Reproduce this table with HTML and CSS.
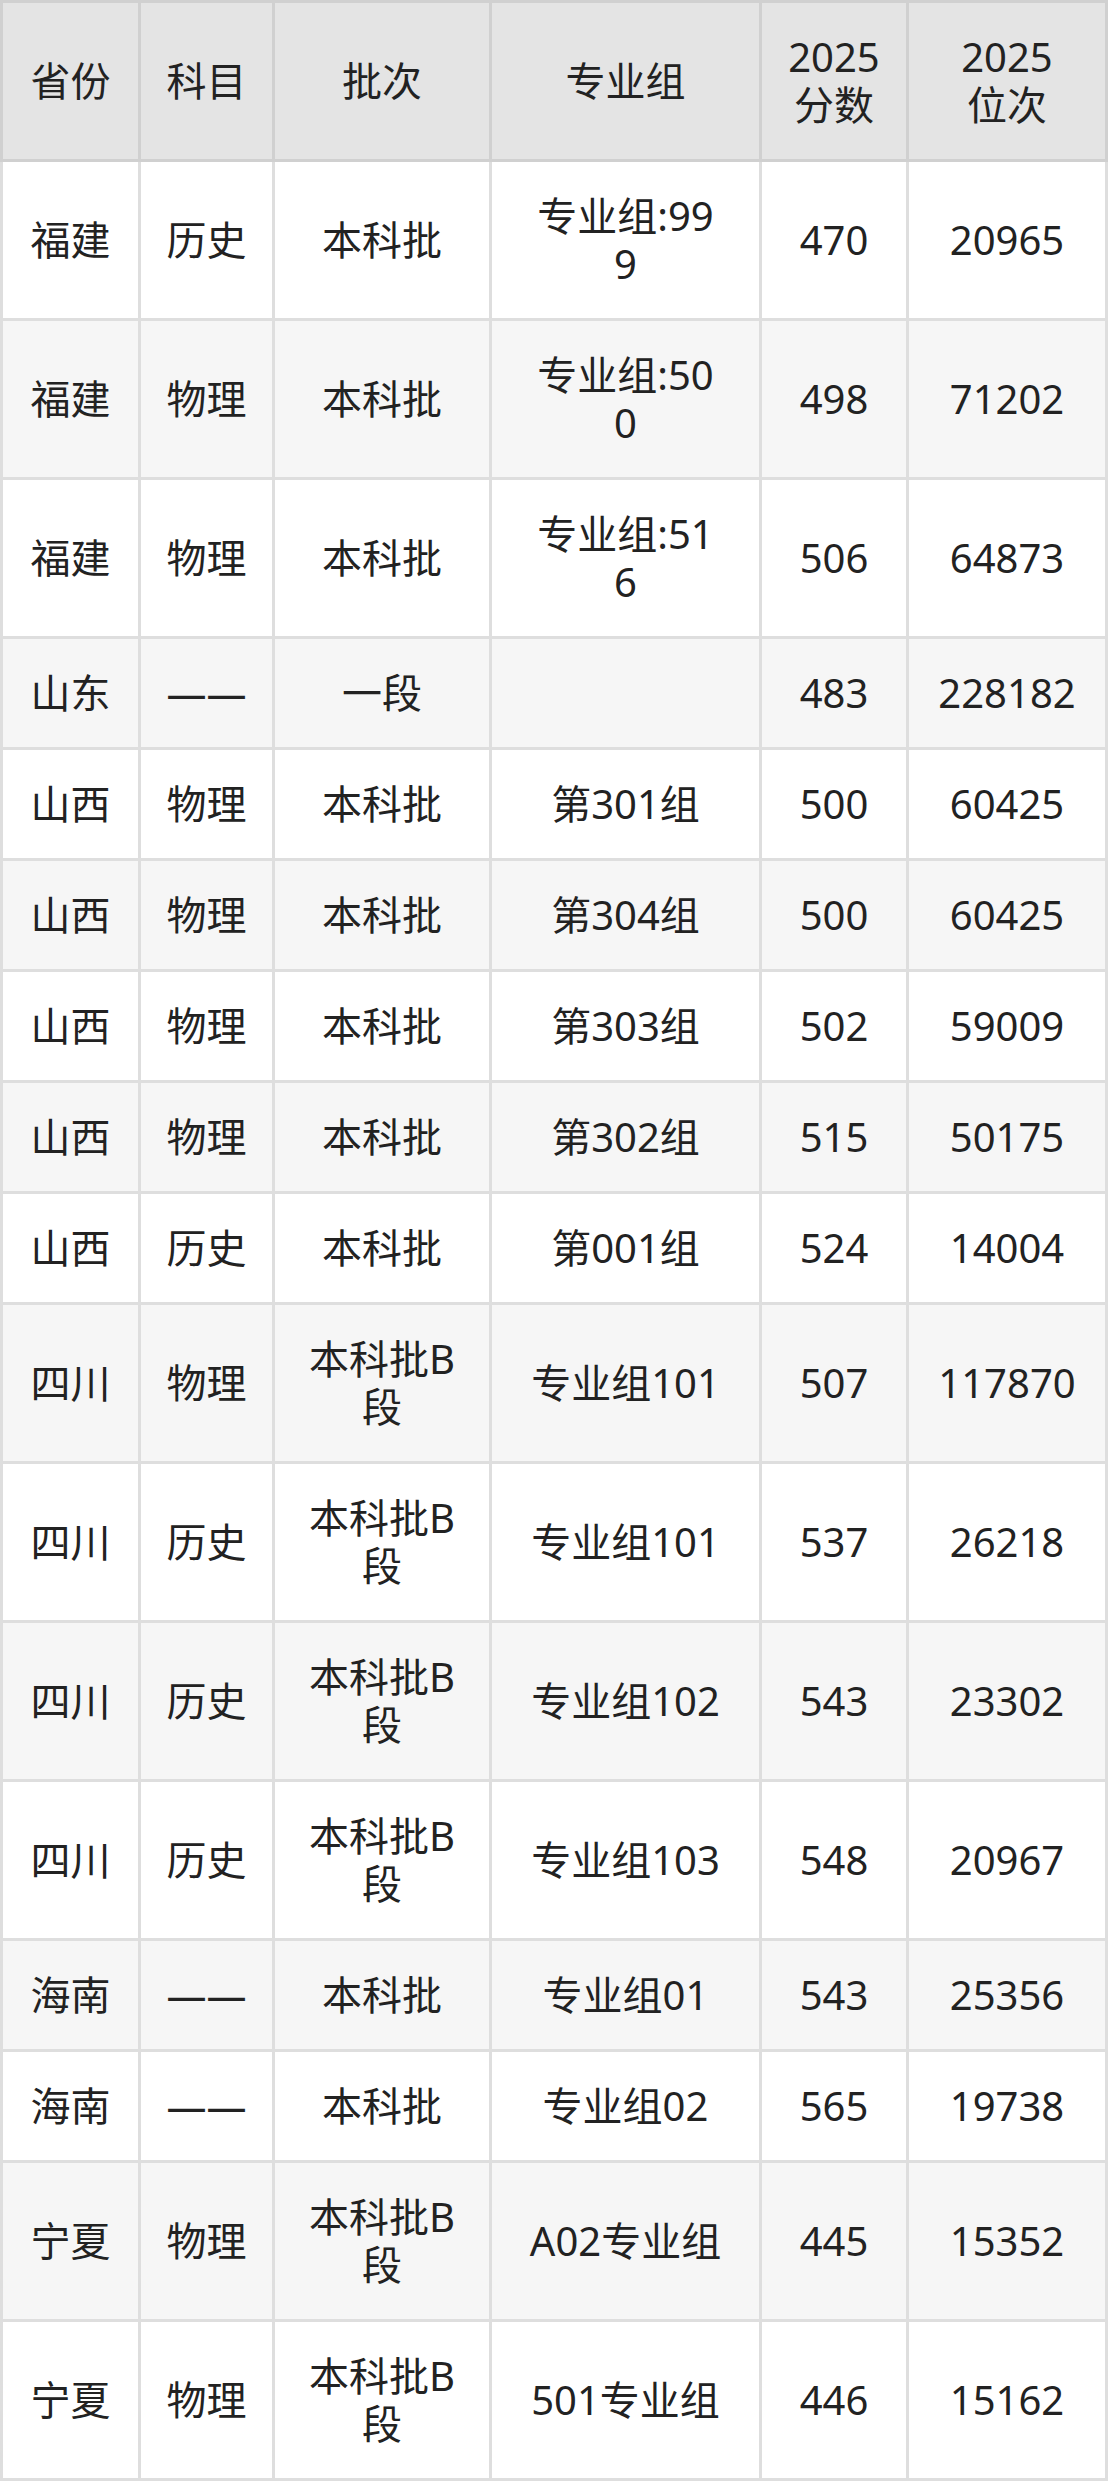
FILE: index.html
```html
<!DOCTYPE html>
<html lang="zh-CN">
<head>
<meta charset="utf-8">
<title>2025 分数位次</title>
<link rel="stylesheet" href="styles.css">
</head>
<body>
<table class="score-table">
  <thead>
    <tr>
      <th class="c1">省份</th>
      <th class="c2">科目</th>
      <th class="c3">批次</th>
      <th class="c4">专业组</th>
      <th class="c5">2025<br>分数</th>
      <th class="c6">2025<br>位次</th>
    </tr>
  </thead>
  <tbody>
    <tr><td>福建</td><td>历史</td><td>本科批</td><td>专业组:99<br>9</td><td>470</td><td>20965</td></tr>
    <tr><td>福建</td><td>物理</td><td>本科批</td><td>专业组:50<br>0</td><td>498</td><td>71202</td></tr>
    <tr><td>福建</td><td>物理</td><td>本科批</td><td>专业组:51<br>6</td><td>506</td><td>64873</td></tr>
    <tr><td>山东</td><td>——</td><td>一段</td><td></td><td>483</td><td>228182</td></tr>
    <tr><td>山西</td><td>物理</td><td>本科批</td><td>第301组</td><td>500</td><td>60425</td></tr>
    <tr><td>山西</td><td>物理</td><td>本科批</td><td>第304组</td><td>500</td><td>60425</td></tr>
    <tr><td>山西</td><td>物理</td><td>本科批</td><td>第303组</td><td>502</td><td>59009</td></tr>
    <tr><td>山西</td><td>物理</td><td>本科批</td><td>第302组</td><td>515</td><td>50175</td></tr>
    <tr><td>山西</td><td>历史</td><td>本科批</td><td>第001组</td><td>524</td><td>14004</td></tr>
    <tr><td>四川</td><td>物理</td><td>本科批B<br>段</td><td>专业组101</td><td>507</td><td>117870</td></tr>
    <tr><td>四川</td><td>历史</td><td>本科批B<br>段</td><td>专业组101</td><td>537</td><td>26218</td></tr>
    <tr><td>四川</td><td>历史</td><td>本科批B<br>段</td><td>专业组102</td><td>543</td><td>23302</td></tr>
    <tr><td>四川</td><td>历史</td><td>本科批B<br>段</td><td>专业组103</td><td>548</td><td>20967</td></tr>
    <tr><td>海南</td><td>——</td><td>本科批</td><td>专业组01</td><td>543</td><td>25356</td></tr>
    <tr><td>海南</td><td>——</td><td>本科批</td><td>专业组02</td><td>565</td><td>19738</td></tr>
    <tr><td>宁夏</td><td>物理</td><td>本科批B<br>段</td><td>A02专业组</td><td>445</td><td>15352</td></tr>
    <tr><td>宁夏</td><td>物理</td><td>本科批B<br>段</td><td>501专业组</td><td>446</td><td>15162</td></tr>
  </tbody>
</table>
</body>
</html>
```

FILE: styles.css
```css
html, body {
  margin: 0;
  padding: 0;
  background: #ffffff;
}

.score-table {
  width: 1108px;
  table-layout: fixed;
  border-collapse: separate;
  border-spacing: 0;
  font-family: "Noto Sans", "Noto Sans CJK SC", sans-serif;
  font-size: 40px;
  line-height: 48px;
  color: #222222;
}

.score-table th,
.score-table td {
  box-sizing: border-box;
  padding: 30px 8px;
  text-align: center;
  vertical-align: middle;
  font-weight: normal;
  border-right: 3px solid #dedede;
  border-bottom: 3px solid #dedede;
}

.score-table th {
  background: #e4e4e4;
  border-color: #d0d0d0;
  border-top: 3px solid #d0d0d0;
}

.score-table th:first-child,
.score-table td:first-child {
  border-left: 3px solid #dedede;
}

.score-table th:first-child {
  border-left-color: #d0d0d0;
}

.score-table tbody tr:nth-child(even) td {
  background: #f6f6f6;
}

.c1 { width: 141px; }
.c2 { width: 134px; }
.c3 { width: 217px; }
.c4 { width: 270px; }
.c5 { width: 147px; }
.c6 { width: 199px; }
```
